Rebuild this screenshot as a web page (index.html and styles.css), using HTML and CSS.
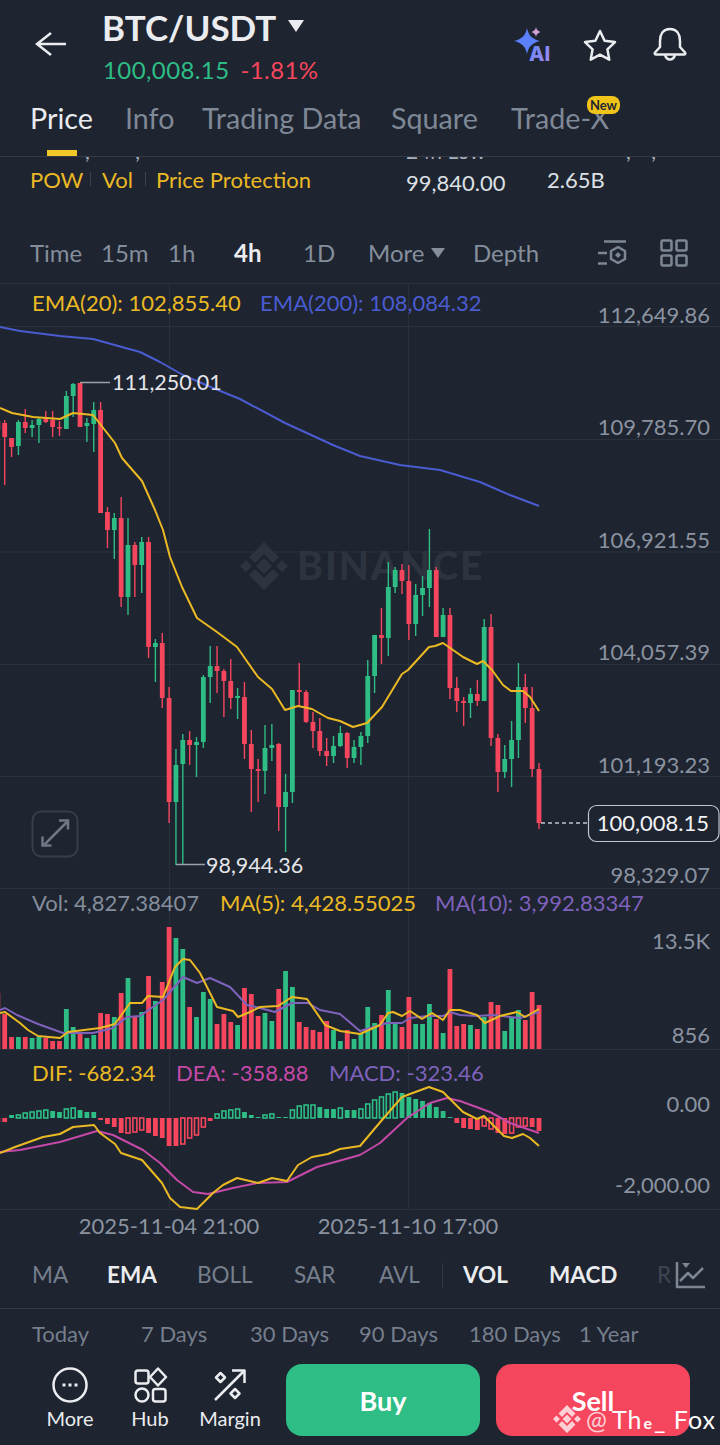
FILE: index.html
```html
<!DOCTYPE html>
<html lang="en">

<head>
    <meta charset="UTF-8">
    <meta name="viewport" content="width=device-width, initial-scale=1.0">
    <title>BTC/USDT</title>
    <link rel="stylesheet" href="styles.css">
</head>

<body>
    <div id="page">
        <header class="topbar">
            <svg class="back" width="32" height="24" viewBox="0 0 32 24">
                <path d="M31 12H2M16 1L2 12l14 11" />
            </svg>
            <div class="pair">
                <div class="pair-name">BTC/USDT <span class="caret-big"></span></div>
                <div class="pair-price"><span class="green">100,008.15</span><span class="red">-1.81%</span></div>
            </div>
            <div class="top-icons">
                <svg width="40" height="36" viewBox="0 0 40 36">
                    <defs>
                        <linearGradient id="ai-grad" x1="0" y1="0" x2="1" y2="1">
                            <stop offset="0" stop-color="#5f86fb" />
                            <stop offset="1" stop-color="#a98af0" />
                        </linearGradient>
                    </defs>
                    <path d="M14 1c1.500 7 4.500 11 13 13-8.500 2-11.500 6-13 13-1.500-7-4.500-11-13-13 8.500-2 11.500-6 13-13z" fill="#5b80fb" />
                    <path d="M23 0c.5 2.500 1.500 3.800 4.500 5-3 1.200-4 2.500-4.500 5-.5-2.500-1.500-3.800-4.500-5 3-1.200 4-2.500 4.500-5z" fill="#cda3d8" />
                    <text class="ai-text" x="16" y="34">AI</text>
                </svg>
                <svg width="36" height="34" viewBox="0 0 36 34">
                    <path class="icon-line" d="M18 3l4.600 9.700 10.400 1.400-7.600 7.200 1.900 10.400L18 26.700l-9.300 5 1.900-10.400L3 14.100l10.400-1.400z" />
                </svg>
                <svg class="bell" width="36" height="36" viewBox="0 0 36 36">
                    <path class="icon-line" d="M18 2C11 2 8 7.500 8 14v6L3 25.500c-.8 1 0 2 1 2h28c1 0 1.800-1 1-2L28 20v-6C28 7.500 25 2 18 2z" />
                    <path class="icon-line" d="M13 28c1 3 3 4.500 5 4.500s4-1.500 5-4.500" />
                </svg>
            </div>
        </header>

        <nav class="tabs">
            <span class="tab active">Price</span>
            <span class="tab">Info</span>
            <span class="tab">Trading Data</span>
            <span class="tab">Square</span>
            <span class="tab tab-new">Trade-X<em class="badge">New</em></span>
        </nav>

        <div class="tabs-line"><i class="tab-marker"></i></div>

        <div class="stats-cut">
            <span class="cut-price">, ,</span>
            <span class="cut-label">24h Low</span>
            <span class="cut-right">, ,</span>
        </div>

        <div class="stats">
            <div class="tags">
                <span>POW</span><i></i><span>Vol</span><i></i><span>Price Protection</span>
            </div>
            <span class="low-value">99,840.00</span>
            <span class="turnover">2.65B</span>
        </div>

        <div class="intervals">
            <span>Time</span>
            <span>15m</span>
            <span>1h</span>
            <span class="on">4h</span>
            <span>1D</span>
            <span>More <b class="caret-small"></b></span>
            <span>Depth</span>
            <svg width="30" height="28" viewBox="0 0 30 28">
                <path class="tool-line" d="M7 2.500h22M1 14h9M1 24.500h9" />
                <path class="tool-line" d="M21 8l7 4v8l-7 4-7-4v-8z" />
                <path d="M21 13l3 3-3 3-3-3z" fill="#7d8694" />
            </svg>
            <svg width="28" height="28" viewBox="0 0 28 28">
                <rect class="tool-line" x="1.500" y="1.500" width="10" height="10" rx="1.500" />
                <rect class="tool-line" x="16.500" y="1.500" width="10" height="10" rx="1.500" />
                <rect class="tool-line" x="1.500" y="16.500" width="10" height="10" rx="1.500" />
                <rect class="tool-line" x="16.500" y="16.500" width="10" height="10" rx="1.500" />
            </svg>
        </div>

        <div class="chart">
            <!-- the viewBox keeps page coordinates so the price data reads as pixels -->
            <svg id="chart" width="720" height="958" viewBox="0 283 720 958">
                <g class="grid">
                    <path d="M0 283.500H720M0 326.500H720M0 439.500H720M0 552H720M0 664.500H720M0 776.500H720M0 888.500H720M0 1049.500H720M0 1209.500H720" />
                    <path d="M169.500 284V1209M408.500 284V1209" />
                </g>

                <g class="mark">
                    <path d="M264 542l15 15-6 6-9-9-9 9-6-6zM264 590l-15-15 6-6 9 9 9-9 6 6zM240 566l6-6 6 6-6 6zM288 566l-6-6-6 6 6 6zM264 558l8 8-8 8-8-8z" />
                    <text class="mark-text" x="297" y="580">BINANCE</text>
                </g>

                <g id="volume"></g>
                <g id="histogram"></g>
                <g id="candles"></g>
                <g id="lines"></g>

                <text class="legend c-yellow" x="32" y="311">EMA(20): 102,855.40</text>
                <text class="legend c-blue" x="260" y="311">EMA(200): 108,084.32</text>
                <text class="legend c-grey" x="32" y="911">Vol: 4,827.38407</text>
                <text class="legend c-yellow" x="220" y="911">MA(5): 4,428.55025</text>
                <text class="legend c-purple" x="435" y="911">MA(10): 3,992.83347</text>
                <text class="legend c-yellow" x="32" y="1081">DIF: -682.34</text>
                <text class="legend c-pink" x="176" y="1081">DEA: -358.88</text>
                <text class="legend c-purple" x="329" y="1081">MACD: -323.46</text>

                <g class="axis">
                    <text x="710" y="323">112,649.86</text>
                    <text x="710" y="435">109,785.70</text>
                    <text x="710" y="548">106,921.55</text>
                    <text x="710" y="660">104,057.39</text>
                    <text x="710" y="773">101,193.23</text>
                    <text x="710" y="883">98,329.07</text>
                    <text x="710" y="949">13.5K</text>
                    <text x="710" y="1043">856</text>
                    <text x="710" y="1112">0.00</text>
                    <text x="710" y="1193">-2,000.00</text>
                </g>
                <text class="date" x="169" y="1234">2025-11-04 21:00</text>
                <text class="date" x="408" y="1234">2025-11-10 17:00</text>

                <path class="peak-line" d="M80 382.500H110M176 864.500H205" />
                <text class="peak" x="112" y="390">111,250.01</text>
                <text class="peak" x="206" y="873">98,944.36</text>

                <path class="last-line" d="M541 823H588" />
                <rect class="last-box" x="588.500" y="805.500" width="130.500" height="36" rx="8" />
                <text class="last" x="709" y="831">100,008.15</text>

                <rect class="expand-box" x="32.500" y="811.500" width="45" height="45" rx="9" />
                <path class="expand" d="M43 846l24-24M59 820.500h9v9M42.500 836.500v9h9" />
            </svg>
        </div>

        <div class="indicators">
            <span>MA</span>
            <span class="on">EMA</span>
            <span>BOLL</span>
            <span>SAR</span>
            <span>AVL</span>
            <i class="sep"></i>
            <span class="on">VOL</span>
            <span class="on">MACD</span>
            <span class="cut">R</span>
            <svg width="30" height="28" viewBox="0 0 30 28">
                <path class="tool-line" d="M2 1v25h28" />
                <path class="tool-line" d="M5 20l8-8 5 5 10-10" />
                <path d="M7 2h8l-4 5z" fill="#7d8694" />
            </svg>
        </div>

        <div class="ranges">
            <span>Today</span>
            <span>7 Days</span>
            <span>30 Days</span>
            <span>90 Days</span>
            <span>180 Days</span>
            <span>1 Year</span>
        </div>

        <footer class="actions">
            <div class="action">
                <svg width="36" height="36" viewBox="0 0 36 36">
                    <circle class="icon-line" cx="18" cy="18" r="16.500" />
                    <path d="M10.500 16.500h3v3h-3zM16.500 16.500h3v3h-3zM22.500 16.500h3v3h-3z" fill="#eaecef" />
                </svg>
                <span>More</span>
            </div>
            <div class="action">
                <svg width="36" height="36" viewBox="0 0 36 36">
                    <rect class="icon-line" x="3.500" y="3.500" width="13" height="13" rx="2.500" />
                    <path class="icon-line" d="M26 1.500l8 8.500-8 8.500-8-8.500z" />
                    <circle class="icon-line" cx="10" cy="28" r="6.500" />
                    <rect class="icon-line" x="21" y="22" width="12.500" height="12.500" rx="2.500" />
                </svg>
                <span>Hub</span>
            </div>
            <div class="action">
                <svg width="36" height="36" viewBox="0 0 36 36">
                    <path class="icon-line" d="M3 33L32 4M20 3.500h12.500V16" />
                    <path class="icon-line" d="M8.500 6l4.500 4.500L8.500 15 4 10.500zM23 22l4.500 4.500L23 31l-4.500-4.500z" />
                </svg>
                <span>Margin</span>
            </div>
            <button class="trade buy">Buy</button>
            <button class="trade sell">Sell</button>
        </footer>

        <div class="creator">
            <svg width="28" height="28" viewBox="0 0 28 28">
                <path d="M14 0l8.500 8.500-3.500 3.500-5-5-5 5-3.500-3.500zM14 28l-8.500-8.500 3.500-3.500 5 5 5-5 3.500 3.500zM0 14l3.500-3.500L7 14l-3.500 3.500zM28 14l-3.500-3.500L21 14l3.500 3.500zM14 9.500l4.500 4.500-4.500 4.500L9.500 14z" />
            </svg>
            <span><b class="at">@</b>Th<small class="tiny-e">e</small>_ Fox</span>
        </div>
    </div>

    <script src="chart.js"></script>
</body>
</html>
```

FILE: styles.css
```css
:root {
    --background: #1e2430;
    --line: #333945;
    --grid: #2b313c;
    --text: #eaecef;
    --muted: #848e9c;
    --yellow: #eab924;
    --green: #2ebd85;
    --red: #f6465d;
}

* {
    box-sizing: border-box;
}

body {
    margin: 0;
    background-color: var(--background);
    color: var(--text);
    font-family: 'Lato', 'Noto Sans', Arial, sans-serif;
}

#page {
    position: relative;
    width: 720px;
    height: 1445px;
    overflow: hidden;
}

.green {
    color: var(--green);
}

.red {
    color: var(--red);
}

/* top bar */
.topbar {
    display: flex;
    height: 95px;
    padding-left: 35px;
}

.back {
    margin-top: 32px;
    margin-right: 35px;
}

.back path {
    fill: none;
    stroke: var(--text);
    stroke-width: 2.5;
}

.pair {
    flex: 1;
    padding-top: 7px;
}

.pair-name {
    display: flex;
    align-items: center;
    gap: 12px;
    font-size: 35px;
    line-height: 40px;
    font-weight: 700;
}

.caret-big {
    width: 0;
    height: 0;
    border-left: 8.500px solid transparent;
    border-right: 8.500px solid transparent;
    border-top: 12px solid var(--text);
    margin-top: -3px;
}

.pair-price {
    display: flex;
    gap: 11px;
    margin-top: 9px;
    margin-left: 1px;
    font-size: 24px;
    line-height: 28px;
    letter-spacing: 0.4px;
}

.top-icons {
    display: flex;
    align-items: center;
    gap: 29px;
    height: 36px;
    margin-top: 27px;
    margin-right: 32px;
}

.bell {
    margin-left: 5px;
}

.icon-line {
    fill: none;
    stroke: var(--text);
    stroke-width: 2.500;
    stroke-linejoin: round;
}

.ai-text {
    font-family: 'Inter', sans-serif;
    font-size: 20px;
    font-weight: 800;
    fill: url(#ai-grad);
}

/* tabs */
.tabs {
    display: grid;
    grid-template-columns: 95px 77px 189px 120px auto;
    height: 46px;
    padding-left: 30px;
    font-size: 28.700px;
    line-height: 46px;
    color: #7f8896;
}

.tab.active {
    color: var(--text);
}

.tab-new {
    position: relative;
}

.badge {
    position: absolute;
    top: 1px;
    left: 76px;
    width: 33px;
    height: 18px;
    border-radius: 8px;
    background-color: #f0c419;
    color: #1e2430;
    font-size: 13px;
    line-height: 18px;
    font-style: normal;
    font-weight: 700;
    text-align: center;
}

.tabs-line {
    height: 16px;
    border-bottom: 1px solid var(--line);
    padding-left: 47px;
    padding-top: 9px;
}

.tab-marker {
    display: block;
    width: 30px;
    height: 6px;
    background-color: #f0c929;
}

/* what is left of the scrolled stats block */
.stats-cut {
    display: grid;
    grid-template-columns: 376px 150px auto;
    height: 5px;
    padding-left: 30px;
    overflow: hidden;
    color: #a8b0bb;
    font-size: 21px;
    line-height: 21px;
}

.cut-price,
.cut-label,
.cut-right {
    display: block;
    margin-top: -17px;
}

.cut-price {
    padding-left: 55px;
    word-spacing: 40px;
}

.cut-right {
    padding-left: 70px;
    word-spacing: 15px;
}

.stats {
    display: grid;
    grid-template-columns: 376px 141px auto;
    align-items: center;
    height: 38px;
    padding-left: 30px;
    padding-bottom: 4px;
    font-size: 22px;
}

.tags {
    display: grid;
    grid-template-columns: 60px 12px 43px 11px auto;
    align-items: center;
    color: var(--yellow);
}

.tags i {
    display: block;
    width: 1px;
    height: 14px;
    background-color: #3d4350;
}

.low-value {
    padding-top: 6px;
    color: #dde0e5;
}

.turnover {
    color: #dde0e5;
}

/* interval row */
.intervals {
    display: grid;
    grid-template-columns: 71px 67px 66px 69px 65px 105px 124px 63px auto;
    align-items: center;
    height: 83px;
    padding-left: 30px;
    padding-top: 22px;
    font-size: 24px;
    color: var(--muted);
}

.intervals .on {
    color: var(--text);
    font-weight: 700;
}

.caret-small {
    display: inline-block;
    width: 0;
    height: 0;
    margin-bottom: 4px;
    border-left: 7.500px solid transparent;
    border-right: 7.500px solid transparent;
    border-top: 10px solid var(--muted);
}

.tool-line {
    fill: none;
    stroke: #7d8694;
    stroke-width: 2.500;
    stroke-linejoin: round;
}

/* chart */
.chart {
    height: 958px;
}

#chart {
    display: block;
}

.grid path {
    fill: none;
    stroke: var(--grid);
    stroke-width: 1;
}

.mark {
    fill: #2d333f;
}

.mark-text {
    font-size: 39px;
    font-weight: 900;
    letter-spacing: 2px;
}

.legend {
    font-size: 22px;
}

.c-yellow {
    fill: var(--yellow);
}

.c-blue {
    fill: #4a5cd0;
}

.c-grey {
    fill: var(--muted);
}

.c-purple {
    fill: #7e62bb;
}

.c-pink {
    fill: #c54aa8;
}

.axis text {
    font-size: 22px;
    fill: #8b93a0;
    text-anchor: end;
}

.date {
    font-size: 22px;
    fill: #8b93a0;
    text-anchor: middle;
}

.peak {
    font-size: 21.500px;
    fill: #e3e5e9;
}

.peak-line {
    fill: none;
    stroke: #9aa0aa;
    stroke-width: 1.500;
}

.last-line {
    fill: none;
    stroke: #c2c6cc;
    stroke-width: 1.500;
    stroke-dasharray: 4 3;
}

.last-box {
    fill: var(--background);
    stroke: #c2c6cc;
    stroke-width: 1.200;
}

.last {
    font-size: 22px;
    fill: #f2f3f5;
    text-anchor: end;
}

.expand-box {
    fill: none;
    stroke: #373d49;
    stroke-width: 2;
}

.expand {
    fill: none;
    stroke: #6f7785;
    stroke-width: 2.500;
}

.wick {
    stroke-width: 1.400;
}

.hollow {
    fill: none;
    stroke-width: 1.600;
}

.curve {
    fill: none;
    stroke-width: 2;
    stroke-linejoin: round;
}

/* indicator row */
.indicators {
    display: grid;
    grid-template-columns: 75px 90px 97px 85px 63px 21px 86px 108px 18px auto;
    align-items: center;
    height: 68px;
    padding-left: 32px;
    border-bottom: 1px solid var(--line);
    font-size: 22.500px;
    color: #767f8d;
}

.indicators .on {
    color: var(--text);
    font-weight: 700;
}

.indicators .cut {
    color: #3f4653;
}

.sep {
    display: block;
    width: 1px;
    height: 24px;
    background-color: var(--line);
}

.ranges {
    display: grid;
    grid-template-columns: 109px 109px 109px 110px 110px auto;
    align-items: center;
    height: 50px;
    padding-left: 32px;
    padding-bottom: 2px;
    font-size: 22px;
    color: #767f8d;
}

/* bottom actions */
.actions {
    display: flex;
    align-items: flex-start;
    padding-left: 30px;
}

.action {
    display: flex;
    flex-direction: column;
    align-items: center;
    width: 80px;
    padding-top: 8px;
    font-size: 20px;
    color: var(--text);
}

.action span {
    margin-top: 3px;
}

.trade {
    width: 194px;
    height: 72px;
    margin-top: 5px;
    border: none;
    border-radius: 16px;
    color: #fff;
    font-family: inherit;
    font-size: 27px;
    font-weight: 700;
}

.buy {
    margin-left: 16px;
    background-color: #2ebd85;
}

.sell {
    margin-left: 16px;
    background-color: #f6465d;
}

/* creator tag stamped over the sell button */
.creator {
    position: absolute;
    top: 1405px;
    left: 553px;
    display: flex;
    align-items: center;
    gap: 5px;
    height: 28px;
    color: #fff;
    font-size: 25px;
    letter-spacing: 1px;
    white-space: nowrap;
}

.creator path {
    fill: rgba(255, 255, 255, 0.75);
}

.at {
    margin-right: 4px;
    color: rgba(255, 255, 255, 0.75);
    font-weight: 400;
}

.tiny-e {
    font-size: 16px;
    font-weight: 700;
    margin: 0 1px;
}
```

FILE: chart.js
```js
// hi, body top, body bottom, lo, colour, top of the volume bar, end of the macd bar
const rows = [
    [415, 421, 430, 450, 'r', 993, 1122],
    [420, 423, 437, 485, 'r', 1014, 1122],
    [438, 438, 447, 457, 'r', 1037, 1115],
    [420, 422, 446, 455, 'g', 1037, 1115],
    [409, 422, 428, 433, 'r', 1037, 1113],
    [420, 425, 428, 437, 'g', 1038, 1112],
    [417, 419, 425, 443, 'g', 1037, 1111],
    [411, 419, 422, 423, 'r', 1038, 1110],
    [411, 420, 427, 437, 'r', 1041, 1111],
    [421, 427, 428, 436, 'r', 1041, 1112],
    [391, 396, 429, 429, 'g', 1009, 1109],
    [383, 384, 396, 417, 'g', 1027, 1108],
    [383, 383, 427, 427, 'r', 1034, 1110],
    [418, 423, 426, 442, 'g', 1038, 1112],
    [402, 410, 424, 452, 'g', 1035, 1112],
    [402, 410, 513, 513, 'r', 1013, 1120],
    [507, 512, 530, 548, 'r', 1014, 1124],
    [513, 518, 530, 559, 'g', 1017, 1127],
    [497, 518, 597, 607, 'r', 993, 1133],
    [518, 545, 597, 615, 'g', 978, 1133],
    [542, 545, 565, 597, 'r', 1017, 1132],
    [537, 542, 565, 593, 'g', 1012, 1130],
    [537, 542, 647, 658, 'r', 976, 1133],
    [639, 643, 647, 682, 'g', 1001, 1136],
    [633, 643, 698, 708, 'r', 982, 1138],
    [687, 698, 802, 823, 'r', 927, 1146],
    [749, 765, 802, 865, 'g', 938, 1146],
    [734, 740, 764, 865, 'g', 949, 1144],
    [731, 740, 745, 765, 'r', 1007, 1138],
    [737, 742, 745, 777, 'g', 1017, 1135],
    [675, 677, 742, 748, 'g', 992, 1127],
    [646, 666, 677, 703, 'g', 999, 1121],
    [646, 666, 671, 693, 'r', 1024, 1114],
    [669, 671, 681, 717, 'r', 1014, 1111],
    [659, 681, 698, 709, 'r', 1022, 1110],
    [688, 696, 698, 719, 'g', 1025, 1109],
    [682, 697, 744, 759, 'r', 988, 1112],
    [730, 744, 769, 812, 'r', 994, 1115],
    [759, 769, 771, 802, 'r', 1016, 1117],
    [725, 748, 771, 794, 'g', 1013, 1115],
    [724, 745, 748, 761, 'g', 1021, 1114],
    [743, 744, 807, 831, 'r', 989, 1117],
    [774, 792, 807, 852, 'g', 971, 1117],
    [690, 690, 792, 803, 'g', 987, 1110],
    [663, 690, 692, 707, 'r', 1022, 1106],
    [690, 692, 722, 723, 'r', 1027, 1105],
    [712, 722, 731, 748, 'r', 1030, 1105],
    [718, 731, 751, 756, 'r', 1032, 1107],
    [738, 751, 756, 766, 'r', 1021, 1109],
    [736, 746, 756, 763, 'g', 1030, 1109],
    [726, 733, 746, 747, 'g', 1041, 1108],
    [732, 733, 758, 768, 'r', 1030, 1110],
    [740, 747, 758, 763, 'g', 1039, 1110],
    [732, 736, 747, 765, 'g', 1033, 1109],
    [660, 676, 736, 743, 'g', 1007, 1104],
    [635, 635, 676, 693, 'g', 1023, 1100],
    [608, 635, 638, 664, 'r', 1015, 1097],
    [562, 587, 638, 656, 'g', 990, 1094],
    [567, 570, 587, 593, 'g', 1024, 1092],
    [564, 570, 581, 594, 'r', 1027, 1093],
    [565, 581, 624, 640, 'r', 997, 1097],
    [584, 595, 624, 636, 'g', 1024, 1099],
    [576, 588, 595, 616, 'g', 1024, 1101],
    [529, 570, 588, 607, 'g', 1004, 1103],
    [567, 570, 637, 637, 'r', 1019, 1107],
    [608, 615, 637, 637, 'g', 1033, 1111],
    [608, 615, 688, 699, 'r', 969, 1117],
    [677, 688, 701, 712, 'r', 1026, 1123],
    [697, 701, 703, 726, 'r', 1024, 1128],
    [688, 694, 703, 718, 'g', 1025, 1129],
    [680, 694, 701, 706, 'r', 1029, 1130],
    [619, 627, 701, 701, 'g', 1017, 1126],
    [614, 627, 738, 746, 'r', 1002, 1129],
    [734, 738, 772, 792, 'r', 1005, 1133],
    [745, 759, 772, 778, 'g', 1031, 1134],
    [721, 740, 759, 787, 'g', 1017, 1133],
    [663, 687, 740, 758, 'g', 1010, 1127],
    [674, 687, 708, 723, 'r', 1020, 1126],
    [687, 708, 769, 777, 'r', 992, 1127],
    [763, 769, 823, 829, 'r', 1005, 1131]
];

// macd bars that are drawn as outlines
const hollow = [3, 4, 5, 6, 7, 10, 11, 19, 20, 21, 27, 28, 29, 30, 32, 33, 34, 35, 39, 40, 43, 44, 45, 46, 50, 53, 54, 55, 56, 57, 58, 71, 72, 75, 76, 77];

const curves = [
    ['#eab924', '0,408 12,413 33,417 60,419 73,413 93,415 115,443 122,458 142,481 155,510 163,530 170,557 182,587 197,618 217,632 237,647 258,677 272,689 285,710 298,706 312,709 328,718 340,721 353,727 367,723 382,707 402,674 408,670 429,647 435,646 443,643 463,657 477,664 483,661 492,670 503,685 511,691 523,691 530,697 539,711'],
    ['#4a5cd0', '0,327 20,331 60,336 93,339 140,352 160,362 183,375 213,388 240,399 285,423 333,445 360,456 400,465 440,470 480,482 510,495 539,506'],
    ['#7e62bb', '0,1010 5,1008 17,1015 38,1024 63,1033 93,1033 113,1028 127,1017 140,1016 163,1000 183,977 197,983 210,978 230,987 247,1005 260,1008 275,1012 292,1003 308,1003 320,1010 340,1014 360,1031 387,1023 402,1023 410,1018 427,1016 443,1016 450,1012 460,1015 477,1016 493,1015 520,1018 539,1012'],
    ['#eab924', '0,1013 5,1012 20,1023 28,1030 38,1036 60,1038 68,1032 100,1028 115,1024 130,1003 142,1003 148,996 163,997 175,967 183,959 190,960 200,973 217,1007 233,1011 238,1017 250,1012 260,1007 278,1006 292,997 307,999 325,1025 340,1031 360,1034 380,1025 388,1013 393,1012 402,1016 410,1011 422,1019 432,1013 443,1020 450,1010 460,1010 477,1015 485,1023 500,1016 517,1012 525,1017 539,1009'],
    ['#c54aa8', '0,1152 20,1150 60,1142 97,1131 113,1135 143,1150 160,1163 177,1180 193,1192 208,1194 233,1188 257,1183 287,1182 317,1167 360,1155 380,1143 407,1118 430,1103 447,1098 460,1101 490,1112 510,1123 539,1133'],
    ['#eab924', '0,1153 15,1147 43,1137 60,1134 73,1127 94,1125 100,1133 115,1144 121,1153 142,1160 162,1183 170,1198 180,1207 197,1209 213,1193 223,1185 237,1178 258,1183 272,1178 287,1181 298,1165 312,1157 328,1154 340,1149 360,1146 382,1120 402,1097 410,1094 429,1087 443,1092 463,1112 477,1119 484,1116 504,1136 512,1138 523,1134 530,1138 539,1146']
];

const colors = { g: '#2ebd85', r: '#f6465d' };
const zero = 1118;

function candleX(i) {
    return -2.15 + i * 6.85;
}

let volumeHtml = '';
let histHtml = '';
let candleHtml = '';

rows.forEach(function (row, i) {
    const [hi, top, bottom, lo, side, vol, macd] = row;
    const x = candleX(i);
    const fill = colors[side];

    candleHtml += `<line class="wick" x1="${x}" x2="${x}" y1="${hi}" y2="${lo}" stroke="${fill}"/>`;
    candleHtml += `<rect x="${x - 2.4}" y="${top}" width="4.8" height="${Math.max(bottom - top, 1.5)}" fill="${fill}"/>`;

    volumeHtml += `<rect x="${x - 2.4}" y="${vol}" width="4.8" height="${1049 - vol}" fill="${fill}"/>`;

    const barColor = macd < zero ? colors.g : colors.r;
    const barTop = Math.min(macd, zero);
    const barHeight = Math.abs(macd - zero);
    if (hollow.includes(i)) {
        histHtml += `<rect class="hollow" x="${x - 2}" y="${barTop}" width="4" height="${barHeight}" stroke="${barColor}"/>`;
    } else {
        histHtml += `<rect x="${x - 2.4}" y="${barTop}" width="4.8" height="${barHeight}" fill="${barColor}"/>`;
    }
});

document.getElementById('volume').innerHTML = volumeHtml;
document.getElementById('histogram').innerHTML = histHtml;
document.getElementById('candles').innerHTML = candleHtml;
document.getElementById('lines').innerHTML = curves.map(function (curve) {
    return `<polyline class="curve" points="${curve[1]}" stroke="${curve[0]}"/>`;
}).join('');
```
